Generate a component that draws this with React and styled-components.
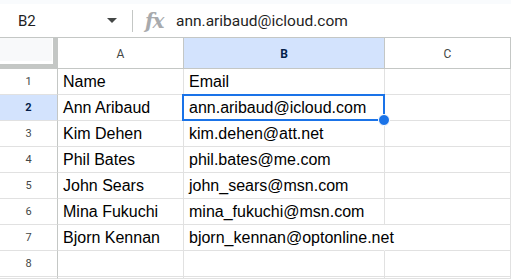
import React from 'react'
import styled, { createGlobalStyle } from 'styled-components'

const GlobalStyle = createGlobalStyle`
	html, body {
		margin: 0;
		padding: 0;
		background: #fff;
		overflow: hidden;
	}
	* {
		box-sizing: border-box;
	}
`

const Page = styled.div`
	width: 511px;
	height: 279px;
	display: flex;
	flex-direction: column;
	padding-top: 4px;
	background: #f9fbfd;
	font-family: Roboto, 'Liberation Sans', sans-serif;
`

const FormulaBar = styled.div`
	height: 35px;
	display: flex;
	align-items: center;
	background: #fff;
	border-bottom: 1px solid #c4c7c5;
`

const NameBox = styled.div`
	width: 132px;
	display: flex;
	align-items: center;
	justify-content: space-between;
	padding: 0 15px 0 18px;
	font-size: 15px;
	color: #1f1f1f;
`

const Caret = styled.span`
	width: 0;
	height: 0;
	border-left: 5px solid transparent;
	border-right: 5px solid transparent;
	border-top: 5px solid #444746;
`

const Divider = styled.div`
	width: 1px;
	height: 22px;
	background: #c4c7c5;
`

const Fx = styled.span`
	width: 43px;
	padding-left: 12px;
	font-family: 'DejaVu Serif', 'Liberation Serif', serif;
	font-style: italic;
	font-weight: 600;
	font-size: 20px;
	color: #a8aaad;
	letter-spacing: -1px;
`

const FormulaText = styled.div`
	font-size: 15.5px;
	color: #1f1f1f;
`

const Sheet = styled.div`
	position: relative;
	flex: 1;
	display: grid;
	grid-template-columns: 58px 126px 201px 1fr;
	grid-template-rows: 31px repeat(8, 26px) 1fr;
	background: #fff;
`

const Corner = styled.div`
	background: #f8f9fa;
	border-right: 1px solid #c4c7c5;
	border-bottom: 1px solid #c4c7c5;
	box-shadow: inset -4px -4px 0 #c4c7c5, inset -5px -7px 0 #fff;
`

const ColHeader = styled.div`
	display: flex;
	align-items: center;
	justify-content: center;
	font-size: 12px;
	color: ${p => (p.$active ? '#041e49' : '#444746')};
	font-weight: ${p => (p.$active ? 700 : 400)};
	background: ${p => (p.$active ? '#d3e3fd' : '#fff')};
	border-right: 1px solid #c4c7c5;
	border-bottom: 1px solid #c4c7c5;
	padding-top: 2px;
`

const RowHeader = styled.div`
	display: flex;
	align-items: center;
	justify-content: center;
	font-size: 11px;
	color: ${p => (p.$active ? '#041e49' : '#444746')};
	font-weight: ${p => (p.$active ? 700 : 400)};
	background: ${p => (p.$active ? '#d3e3fd' : '#fff')};
	border-right: 1px solid #c4c7c5;
	border-bottom: 1px solid #e1e1e1;
`

const Cell = styled.div`
	position: relative;
	display: flex;
	align-items: center;
	padding: 1px 0 0 5px;
	font-family: 'Liberation Sans', Arial, sans-serif;
	font-size: 16px;
	color: #000;
	white-space: nowrap;
	overflow: visible;
	border-right: 1px solid ${p => (p.$overflow ? 'transparent' : '#e1e1e1')};
	border-bottom: 1px solid #e1e1e1;
	z-index: ${p => (p.$selected ? 3 : p.$overflow ? 2 : 1)};
`

const Selection = styled.div`
	position: absolute;
	left: -2px;
	top: -1px;
	right: -1px;
	bottom: -1px;
	border: 2px solid #1a73e8;
	pointer-events: none;
`

const Handle = styled.div`
	position: absolute;
	right: -7px;
	bottom: -7px;
	width: 12px;
	height: 12px;
	border-radius: 50%;
	background: #1a73e8;
	border: 1px solid #fff;
`

const rows = [
	['Name', 'Email'],
	['Ann Aribaud', 'ann.aribaud@icloud.com'],
	['Kim Dehen', 'kim.dehen@att.net'],
	['Phil Bates', 'phil.bates@me.com'],
	['John Sears', 'john_sears@msn.com'],
	['Mina Fukuchi', 'mina_fukuchi@msn.com'],
	['Bjorn Kennan', 'bjorn_kennan@optonline.net'],
	['', ''],
]

const App = () => (
	<>
		<GlobalStyle />
		<Page>
			<FormulaBar>
				<NameBox>
					B2
					<Caret />
				</NameBox>
				<Divider />
				<Fx>fx</Fx>
				<FormulaText>ann.aribaud@icloud.com</FormulaText>
			</FormulaBar>
			<Sheet>
				<Corner />
				<ColHeader>A</ColHeader>
				<ColHeader $active>B</ColHeader>
				<ColHeader>C</ColHeader>
				{rows.map(([name, email], i) => {
					const n = i + 1
					const overflow = email.length > 24
					const selected = n === 2
					return (
						<React.Fragment key={n}>
							<RowHeader $active={selected}>{n}</RowHeader>
							<Cell>{name}</Cell>
							<Cell $overflow={overflow} $selected={selected}>
								{email}
								{selected ? (
									<Selection>
										<Handle />
									</Selection>
								) : null}
							</Cell>
							<Cell />
						</React.Fragment>
					)
				})}
				<RowHeader />
				<Cell />
				<Cell />
				<Cell />
			</Sheet>
		</Page>
	</>
)

export default App
